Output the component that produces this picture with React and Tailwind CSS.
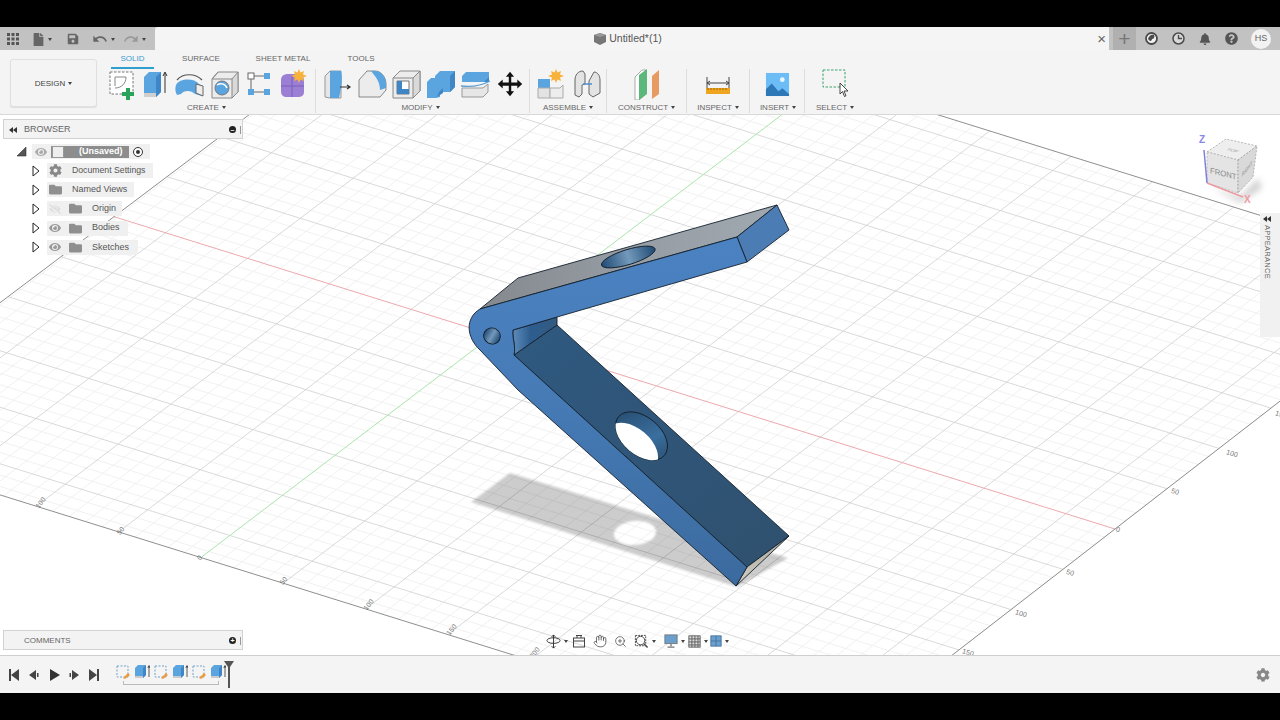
import React from 'react';
import { FaBell, FaQuestionCircle, FaCog, FaEye, FaEyeSlash, FaFolder, FaFile, FaSave } from 'react-icons/fa';
import { MdUndo, MdRedo } from 'react-icons/md';
import { Hand, ZoomIn } from 'lucide-react';

const Caret = () => <span className="ml-[3px] inline-block border-x-[2.5px] border-t-[3px] border-x-transparent border-t-[#444] align-middle" />;

const Ico = ({ children, size = 32, box = 32 }) => (
  <svg width={size} height={size} viewBox={`0 0 ${box} ${box}`}>{children}</svg>
);

const BLUE = '#5aa5e0';
const SIDE = '#d9d9d9';

const SketchIcon = () => (
  <Ico>
    <rect x="4" y="4" width="23" height="22" fill="#fff" stroke="#777" strokeWidth="1" strokeDasharray="2.5 1.5" />
    <path d="M9 9h11M9 9v9M20 9c0 6-4 11-11 11" fill="none" stroke="#888" strokeWidth="1" />
    <path d="M20 20h4v4h4v4h-4v4h-4v-4h-4v-4h4z" fill="#27a35a" />
  </Ico>
);
const ExtrudeIcon = () => (
  <Ico>
    <path d="M4 9l5-5h12v20l-5 5H4z" fill={BLUE} />
    <path d="M16 9l5-5v20l-5 5z" fill="#3e86c6" />
    <path d="M4 25h12v4H4z" fill="#cfcfcf" />
    <path d="M25 25V5M23 8l2-4 2 4" stroke="#333" strokeWidth="1" fill="none" />
  </Ico>
);
const RevolveIcon = () => (
  <Ico>
    <path d="M2 17c4-7 18-7 23-1l3 2v10l-7-2c-4-4-11-4-14 0l-4 1c-2-3-2-7-1-10z" fill={BLUE} />
    <path d="M22 16l7 2v10l-7-3z" fill="#eee" stroke="#666" strokeWidth="1" />
    <path d="M3 12c6-7 18-7 25 0" fill="none" stroke="#555" strokeWidth="1.2" />
  </Ico>
);
const HoleIcon = () => (
  <Ico>
    <path d="M3 11l6-7h20v20l-6 6H3z" fill="#ececec" stroke="#888" />
    <path d="M23 11l6-7v20l-6 6z" fill={SIDE} stroke="#888" />
    <path d="M3 11h20M9 4l-6 7" stroke="#888" fill="none" />
    <circle cx="13" cy="20" r="7" fill={BLUE} stroke="#777" />
    <path d="M8 17c3-2 8-2 10 3" stroke="#fff" strokeWidth="1.5" fill="none" />
  </Ico>
);
const PatternIcon = () => (
  <Ico>
    <rect x="5" y="5" width="6" height="6" fill="#fff" stroke="#666" />
    <rect x="21" y="5" width="6" height="6" fill={BLUE} />
    <rect x="5" y="21" width="6" height="6" fill={BLUE} />
    <rect x="21" y="21" width="6" height="6" fill={BLUE} />
    <path d="M11 8h10M8 11v10M11 24h10" stroke="#666" fill="none" />
  </Ico>
);
const FormIcon = () => (
  <Ico>
    <path d="M4 12c0-4 3-6 7-6h10c3 0 6 3 6 6v12c0 4-3 5-6 5H10c-4 0-6-2-6-6z" fill="#9b7fd4" />
    <path d="M4 18h23M15 8v21" stroke="#7a5fb8" strokeWidth="1" />
    <path d="M22 1l1.600 3.600L27 3l-1 3.600L30 8l-4 1.400 1 3.600-3.400-1.600L22 15l-1.600-3.600L17 13l1-3.600L14 8l4-1.400L17 3l3.400 1.600z" fill="#f7b23b" />
  </Ico>
);
const PressPullIcon = () => (
  <Ico>
    <path d="M4 8l5-5h11v27H9l-5-1z" fill="#e6e6e6" stroke="#999" />
    <path d="M9 3h11c2 8 0 19-2 27H9z" fill={BLUE} />
    <path d="M19 19h9M26 17l3 2-3 2" stroke="#333" strokeWidth="1.2" fill="none" />
  </Ico>
);
const FilletIcon = () => (
  <Ico>
    <path d="M3 12l8-9h8c6 0 11 6 11 13v6l-6 7H3z" fill="#ececec" stroke="#888" />
    <path d="M15 3h4c6 0 11 6 11 13v4l-6 2c0-8-4-13-9-19z" fill={BLUE} />
  </Ico>
);
const ShellIcon = () => (
  <Ico>
    <path d="M3 10l7-7h20v20l-7 7H3z" fill="#ececec" stroke="#888" />
    <path d="M23 10l7-7v20l-7 7z" fill={SIDE} stroke="#888" />
    <path d="M3 10h20" stroke="#888" />
    <path d="M7 13h12v13H7z" fill="#fff" stroke="#777" />
    <path d="M7 13h5v8h7v5H7z" fill="#3e86c6" />
  </Ico>
);
const CombineIcon = () => (
  <Ico>
    <path d="M10 8l5-5h15v16l-5 5H15v5l-4 1H2V14l4-4h4z" fill={BLUE} />
    <path d="M25 8l5-5v16l-5 5zM14 24l4-4v5l-6 4z" fill="#3e86c6" />
  </Ico>
);
const SplitIcon = () => (
  <Ico>
    <path d="M3 8l4-4h23v10H3z" fill={BLUE} />
    <path d="M25 14l5-5v5z" fill="#3e86c6" />
    <path d="M2 18c9 1 20 0 29-5" stroke="#5b9fd6" strokeWidth="1.400" fill="none" />
    <path d="M3 20h21l5-4v8l-5 5H3z" fill="#e6e6e6" stroke="#999" />
  </Ico>
);
const MoveIcon = () => (
  <Ico size={26}>
    <path d="M16 1l5 6h-3.500v7H25v-3.500l6 5.500-6 5.500V18h-7.500v7H21l-5 6-5-6h3.500v-7H7v3.500L1 16l6-5.500V14h7.500V7H11z" fill="#111" />
  </Ico>
);
const NewCompIcon = () => (
  <Ico>
    <path d="M2 11h12v12H2z" fill={BLUE} />
    <path d="M2 20h12v10H2z" fill="#e3e3e3" stroke="#aaa" />
    <path d="M14 20h10l3-3v13H14z" fill="#ededed" stroke="#aaa" />
    <path d="M20 1l1.600 3.600L25 3l-1 3.600L28 8l-4 1.400 1 3.600-3.400-1.600L20 15l-1.600-3.600L15 13l1-3.600L12 8l4-1.400L15 3l3.400 1.600z" fill="#f7b23b" />
  </Ico>
);
const JointIcon = () => (
  <Ico>
    <path d="M4 12c0-5 3-9 8-9l2 3v10l-3 1v9l-3 3-4-2z" fill="#e3e3e3" stroke="#666" />
    <path d="M29 12c0-5-3-8-6-8l-5 9v13l4 3 7-4z" fill="#e3e3e3" stroke="#666" />
    <path d="M12 16h9" stroke="#4a90d0" strokeWidth="1.500" />
  </Ico>
);
const PlaneIcon = () => (
  <Ico>
    <path d="M4 9l7-7h4v24l-7 6H4z" fill="#fff" stroke="#aaa" />
    <path d="M8 7l8-6v25l-8 6z" fill="#5cb87a" />
    <path d="M21 8l7-6v24l-7 5z" fill="#e79a62" />
  </Ico>
);
const RulerIcon = () => (
  <Ico>
    <path d="M5 9v14M27 9v14M5 15h22M8 13l-3 2 3 2M24 13l3 2-3 2" stroke="#444" strokeWidth="1" fill="none" />
    <rect x="4" y="20" width="24" height="6" fill="#efa51f" />
    <path d="M6 20v2M9 20v2M12 20v2M15 20v2M18 20v2M21 20v2M24 20v2" stroke="#8a5a00" strokeWidth="0.800" />
  </Ico>
);
const PictureIcon = () => (
  <Ico size={25} box={26}>
    <rect x="1" y="1" width="24" height="24" fill="#6cbcf5" />
    <circle cx="18" cy="8" r="2.500" fill="#e8f5ff" />
    <path d="M1 25v-7l6-6 7 8 4-3 7 6v2z" fill="#2f78b8" />
  </Ico>
);
const SelectIcon = () => (
  <Ico size={34} box={34}>
    <rect x="5" y="3" width="22" height="17" fill="none" stroke="#3aa36b" strokeWidth="1" strokeDasharray="2.500 1.500" />
    <path d="M22 16v11l2.500-2.500 2 5 1.500-.7-2-4.800H30z" fill="#fff" stroke="#333" strokeWidth="0.900" />
  </Ico>
);

const GROUPS = [
  { label: 'CREATE', w: 'w-[211px]', row: 'justify-start', cell: 'w-[34.2px]', text: 'pr-[7px]', icons: [SketchIcon, ExtrudeIcon, RevolveIcon, HoleIcon, PatternIcon, FormIcon] },
  { label: 'MODIFY', w: 'w-[214px]', row: 'justify-start pl-[3.7px]', cell: 'w-[34.6px]', text: 'pr-[4px]', icons: [PressPullIcon, FilletIcon, ShellIcon, CombineIcon, SplitIcon, MoveIcon] },
  { label: 'ASSEMBLE', w: 'w-[77px]', row: 'justify-start pl-[4.5px]', cell: 'w-[35px]', text: '', icons: [NewCompIcon, JointIcon] },
  { label: 'CONSTRUCT', w: 'w-[80px]', row: 'justify-center', cell: 'w-[34px]', text: '', icons: [PlaneIcon] },
  { label: 'INSPECT', w: 'w-[63px]', row: 'justify-center', cell: 'w-[34px]', text: '', icons: [RulerIcon] },
  { label: 'INSERT', w: 'w-[55px]', row: 'justify-center', cell: 'w-[34px]', text: 'pl-[2px]', icons: [PictureIcon] },
  { label: 'SELECT', w: 'w-[60px]', row: 'justify-center', cell: 'w-[34px]', text: '', icons: [SelectIcon], last: true },
];

const TitleBar = () => (
  <div className="flex h-[23px] shrink-0 bg-[#c2c2c2] text-[#555]">
    <div className="flex w-[155px] items-center pl-[7px] pt-[1px]">
      <svg width="12" height="12" viewBox="0 0 12 12" fill="#555">
        {[0, 4.500, 9].map((x) => [0, 4.500, 9].map((y) => <rect key={`${x}-${y}`} x={x} y={y} width="3" height="3" />))}
      </svg>
      <FaFile className="ml-[13px] text-[13px] text-[#666]" />
      <Caret />
      <FaSave className="ml-[15px] text-[12px] text-[#666]" />
      <MdUndo className="ml-[13px] text-[16px] text-[#666]" />
      <Caret />
      <MdRedo className="ml-[8px] text-[16px] text-[#999]" />
      <Caret />
    </div>
    <div className="relative flex flex-1 items-center justify-center rounded-tl-[3px] bg-[#f5f5f5] pr-[9px] pt-[1px]">
      <svg width="14" height="14" viewBox="0 0 14 14" className="mr-[2px]">
        <path d="M1 3l6-2 6 2v7l-6 3-6-3z" fill="#777" />
        <path d="M1 3l6 2 6-2-6-2z" fill="#999" />
      </svg>
      <span className="text-[10.5px]">Untitled*(1)</span>
      <span className="absolute right-[3px] top-[2px] text-[15px] leading-[20px] text-[#666]">×</span>
    </div>
    <div className="flex w-[171px] items-center pl-[4px]">
      <div className="flex h-[23px] w-[23px] items-center justify-center bg-[#b0b0b0] text-[21px] leading-none text-[#777]">+</div>
      <svg width="13" height="13" viewBox="0 0 13 13" className="ml-[9px]">
        <circle cx="6.500" cy="6.500" r="5.500" fill="#f2f2f2" stroke="#4a4a4a" strokeWidth="1.800" />
        <path d="M3 7c1-3 3-5 6-4 1 2 0 4-2 4 0 2-2 3-4 0z" fill="#4a4a4a" />
      </svg>
      <svg width="13" height="13" viewBox="0 0 13 13" className="ml-[14px]">
        <circle cx="6.500" cy="6.500" r="5.500" fill="#d8d8d8" stroke="#4a4a4a" strokeWidth="1.500" />
        <path d="M6.500 3v3.500H10" fill="none" stroke="#4a4a4a" strokeWidth="1.400" />
      </svg>
      <FaBell className="ml-[14px] text-[12px] text-[#555]" />
      <FaQuestionCircle className="ml-[14px] text-[13px] text-[#555]" />
      <div className="ml-[13px] flex h-[20px] w-[20px] items-center justify-center rounded-full bg-[#f2f2f2] text-[9px] text-[#666]">HS</div>
    </div>
  </div>
);

const Toolbar = () => (
  <div className="flex h-[65px] shrink-0 border-b border-[#d8d8d8] bg-[#f4f4f4] pl-[10px] pt-[1px]">
    <div className="mt-[8px] flex h-[48px] w-[87px] items-center justify-center rounded-[3px] border border-[#e0e0e0] bg-[#f4f4f4] pt-[1px] text-[8px] text-[#444] shadow-[0_1px_1px_#ddd]">
      DESIGN <Caret />
    </div>
    <div className="ml-[8px] flex flex-col">
      <div className="flex h-[18px] text-[8px] leading-[12px] text-[#666]">
        <div className="ml-[6px] h-[18px] w-[43px] border-b-2 border-[#2f9fd0] pt-[2px] text-center text-[#3b9ad0]">SOLID</div>
        <div className="w-[94px] pt-[2px] text-center">SURFACE</div>
        <div className="w-[70px] pt-[2px] text-center">SHEET METAL</div>
        <div className="w-[86px] pt-[2px] text-center">TOOLS</div>
      </div>
      <div className="flex">
        {GROUPS.map((g) => (
          <div key={g.label} className={`${g.w} flex h-[44px] flex-col ${g.last ? '' : 'border-r border-[#dcdcdc]'}`}>
            <div className={`flex h-[30px] shrink-0 items-center ${g.row}`}>
              {g.icons.map((Icon, i) => (
                <div key={i} className={`flex shrink-0 justify-center ${g.cell}`}><Icon /></div>
              ))}
            </div>
            <div className={`mt-[3px] whitespace-nowrap text-center text-[8px] leading-[11px] text-[#666] ${g.text}`}>{g.label}<Caret /></div>
          </div>
        ))}
      </div>
    </div>
  </div>
);

const O = { lx: 114, ly: 216.7, rx: 1115, ry: 529 };
const VMIN = -5.55;
const VMAX = 6.35;
const UMIN = -4.63;
const UMAX = 7.6;

const leftPt = (v) => [O.lx + 53 * v, O.ly - 40 * v];
const rightPt = (v) => [O.rx + 52 * v, O.ry - 40.3 * v];
const gridPt = (u, v) => {
  const k = (u - UMIN) / (UMAX - UMIN);
  const l = leftPt(v);
  const r = rightPt(v);
  return [l[0] + (r[0] - l[0]) * k, l[1] + (r[1] - l[1]) * k];
};
const seg = (a, b, stroke, w, key) => (
  <line key={key} x1={a[0]} y1={a[1]} x2={b[0]} y2={b[1]} stroke={stroke} strokeWidth={w} />
);

const gridLines = () => {
  const out = [];
  for (let i = -25; i <= 40; i++) {
    const u = i / 5;
    if (u < UMIN || u > UMAX || i % 5 === 0) continue;
    out.push(seg(gridPt(u, VMIN), gridPt(u, VMAX), '#eeeeee', 0.8, `mu${i}`));
  }
  for (let i = -30; i <= 35; i++) {
    const v = i / 5;
    if (v < VMIN || v > VMAX || i % 5 === 0) continue;
    out.push(seg(gridPt(UMIN, v), gridPt(UMAX, v), '#eeeeee', 0.8, `mv${i}`));
  }
  for (let u = -4; u <= 7; u++) {
    if (u !== 0) out.push(seg(gridPt(u, VMIN), gridPt(u, VMAX), '#cfcfcf', 0.8, `u${u}`));
  }
  for (let v = -5; v <= 6; v++) {
    if (v !== 0) out.push(seg(gridPt(UMIN, v), gridPt(UMAX, v), '#cfcfcf', 0.8, `v${v}`));
  }
  out.push(seg(gridPt(UMIN, 0), gridPt(UMAX, 0), '#eda9ad', 1, 'red'));
  out.push(seg(gridPt(0, VMIN), gridPt(0, VMAX), '#a9e5ab', 1, 'green'));
  out.push(seg(gridPt(UMIN, VMIN), gridPt(UMAX, VMIN), '#8f8f8f', 1, 'e1'));
  out.push(seg(gridPt(UMAX, VMIN), gridPt(UMAX, VMAX), '#8f8f8f', 1, 'e2'));
  out.push(seg(gridPt(UMIN, VMAX), gridPt(UMAX, VMAX), '#8f8f8f', 1, 'e3'));
  out.push(seg(gridPt(UMIN, VMIN), gridPt(UMIN, VMAX), '#8f8f8f', 1, 'e4'));
  return out;
};

const BOTTOM_LABELS = [['100', 41, 503], ['50', 121, 531], ['0', 200, 558], ['50', 284, 581], ['100', 369, 605], ['150', 452, 630], ['200', 535, 653]];
const RIGHT_LABELS = [['150', 1281, 415], ['100', 1232, 454], ['50', 1175, 492], ['0', 1118, 530], ['50', 1070, 573], ['100', 1021, 614], ['150', 968, 653]];

const Scene = () => (
  <svg className="absolute inset-0" width="1280" height="540" viewBox="0 115 1280 540">
    <defs>
      <linearGradient id="front" x1="0" y1="0" x2="0" y2="1">
        <stop offset="0" stopColor="#4b82c2" />
        <stop offset="0.45" stopColor="#467bb6" />
        <stop offset="1" stopColor="#3b6a9e" />
      </linearGradient>
      <linearGradient id="dark" x1="0" y1="0" x2="1" y2="1">
        <stop offset="0" stopColor="#2f5980" />
        <stop offset="1" stopColor="#30516f" />
      </linearGradient>
      <linearGradient id="top" x1="0" y1="0" x2="1" y2="0">
        <stop offset="0" stopColor="#85898e" />
        <stop offset="0.5" stopColor="#959ca3" />
        <stop offset="1" stopColor="#a1a9b0" />
      </linearGradient>
      <linearGradient id="bore" x1="0" y1="0" x2="1" y2="0">
        <stop offset="0" stopColor="#1f4a74" />
        <stop offset="0.5" stopColor="#7399bb" />
        <stop offset="1" stopColor="#1f4a74" />
      </linearGradient>
      <linearGradient id="bigbore" x1="0" y1="0" x2="1" y2="0.3">
        <stop offset="0" stopColor="#264b6e" />
        <stop offset="0.7" stopColor="#3a6f9f" />
        <stop offset="1" stopColor="#305a80" />
      </linearGradient>
      <linearGradient id="notch" x1="0" y1="0" x2="1" y2="0">
        <stop offset="0" stopColor="#5d8cbb" />
        <stop offset="0.4" stopColor="#2d5d8f" />
        <stop offset="1" stopColor="#335a7f" />
      </linearGradient>
      <linearGradient id="endcap" x1="0" y1="1" x2="1" y2="0">
        <stop offset="0" stopColor="#d2cec3" />
        <stop offset="1" stopColor="#a9a69b" />
      </linearGradient>
      <clipPath id="bigHole">
        <ellipse cx="641.500" cy="436" rx="30" ry="19" transform="rotate(40 641.500 436)" />
      </clipPath>
      <filter id="soft"><feGaussianBlur stdDeviation="1" /></filter>
      <filter id="cubeShadow"><feGaussianBlur stdDeviation="3" /></filter>
    </defs>

    {gridLines()}

    {BOTTOM_LABELS.map(([t, x, y], i) => (
      <text key={i} transform={`translate(${x} ${y}) rotate(-52)`} textAnchor="middle" dominantBaseline="middle" fontSize="7" fill="#777" fontFamily="Liberation Sans">{t}</text>
    ))}
    {RIGHT_LABELS.map(([t, x, y], i) => (
      <text key={i} transform={`translate(${x} ${y}) rotate(17)`} textAnchor="middle" dominantBaseline="middle" fontSize="7" fill="#777" fontFamily="Liberation Sans">{t}</text>
    ))}

    <path
      d="M510 473L471 502L737 587L788 558ZM614 533a21 12 -5 1 0 42 0a21 12 -5 1 0 -42 0Z"
      fill="#000"
      fillOpacity="0.2"
      fillRule="evenodd"
      filter="url(#soft)"
    />

    <g stroke="#14202c" strokeWidth="0.900" strokeLinejoin="round">
      <path d="M480 309L518 278L777 205L737 237Z" fill="url(#top)" />
      <path d="M777 205L789 230L747 262L737 237Z" fill="#4b7cb3" />
      <path d="M514 355L557 325L789 536L747 567Z" fill="url(#dark)" />
      <path d="M513 330L557 317L557 325L514 355C516 346 512 338 513 330Z" fill="url(#notch)" />
      <path d="M747 567L789 536L736 586Z" fill="url(#endcap)" />
      <path d="M480 309L737 237L747 262L557 317L513 330C512 338 516 346 514 355L747 567L736 586L518 390L480 350C466 337 465 318 480 309Z" fill="url(#front)" />
      <ellipse cx="628.300" cy="257" rx="28" ry="7.500" transform="rotate(-17 628.300 257)" fill="url(#bore)" />
      <ellipse cx="492" cy="336" rx="8.500" ry="8" transform="rotate(30 492 336)" fill="url(#bore)" />
      <ellipse cx="641.500" cy="436" rx="30" ry="19" transform="rotate(40 641.500 436)" fill="url(#bigbore)" />
    </g>
    <g clipPath="url(#bigHole)">
      <ellipse cx="632" cy="447" rx="30" ry="19" transform="rotate(40 632 447)" fill="#fff" />
    </g>

    <g>
      <path d="M1210 186L1240 197L1258 178L1262 188L1240 203Z" fill="#000" fillOpacity="0.18" filter="url(#cubeShadow)" />
      <path d="M1207 152L1226 139L1257 146L1238 160Z" fill="#eeeeee" stroke="#999" strokeWidth="0.700" strokeDasharray="2 1.500" />
      <path d="M1207 152L1238 160L1238 193L1207 183Z" fill="#e4e4e4" stroke="#aaa" strokeWidth="0.700" strokeDasharray="2 1.500" />
      <path d="M1238 160L1257 146L1253 177L1238 193Z" fill="#d9d9d9" stroke="#999" strokeWidth="0.700" strokeDasharray="2 1.500" />
      <text transform="matrix(0.96 0.24 0 1 1210 173)" fontSize="8" fill="#888" fontFamily="Liberation Sans">FRONT</text>
      <text transform="matrix(0.55 -0.65 0 1 1242 177)" fontSize="6" fill="#888" fontFamily="Liberation Sans">RIGHT</text>
      <text transform="matrix(0.9 0.2 -0.6 0.5 1226 150)" fontSize="6" fill="#999" fontFamily="Liberation Sans">TOP</text>
      <path d="M1204 150L1207 183" stroke="#7f7fe0" strokeWidth="1.500" />
      <path d="M1207 183L1243 197" stroke="#ec9aa2" strokeWidth="1.500" />
      <text x="1199" y="143" fontSize="10" fontWeight="bold" fill="#8888e8" fontFamily="Liberation Sans">Z</text>
      <text x="1244" y="203" fontSize="10" fontWeight="bold" fill="#f09aa0" fontFamily="Liberation Sans">X</text>
    </g>
  </svg>
);

const DoubleLeft = () => (
  <svg width="8" height="6" viewBox="0 0 8 6" fill="#333"><path d="M4 0v6L0 3zM8 0v6L4 3z" /></svg>
);

const PanelHeader = ({ title, top, sign, size }) => (
  <div className={`absolute left-[3px] ${top} flex h-[20px] w-[240px] items-center border border-[#d2d2d2] bg-[#f3f3f3] pt-[1px] ${size} text-[#666]`}>
    <span className="ml-[5px] w-[15px]">{sign === '-' ? <DoubleLeft /> : null}</span>
    <span>{title}</span>
    <span className="ml-auto flex h-[7px] w-[7px] items-center justify-center rounded-full bg-[#222]">
      <span className="text-[7px] font-bold leading-none text-white">{sign === '-' ? '–' : '+'}</span>
    </span>
    <span className="ml-[4px] mr-[1px] h-[8px] border-l border-[#999]" />
  </div>
);

const Arrow = () => (
  <svg width="8" height="12" viewBox="0 0 8 12" className="shrink-0"><path d="M1 1l6 5-6 5z" fill="#fff" stroke="#222" strokeWidth="1" /></svg>
);

const TREE = [
  { label: 'Document Settings', pill: 'w-[106px]', gear: true, text: 'text-[8.7px]' },
  { label: 'Named Views', pill: 'w-[87px]' },
  { label: 'Origin', pill: 'w-[75px]', eye: 'off' },
  { label: 'Bodies', pill: 'w-[81px]', eye: 'on' },
  { label: 'Sketches', pill: 'w-[91px]', eye: 'on' },
];

const Browser = () => (
  <div className="absolute left-[16px] top-[27px] flex flex-col text-[9px] text-[#555]">
    <div className="flex h-[19px] items-center">
      <svg width="11" height="11" viewBox="0 0 11 11" className="shrink-0"><path d="M10 1v9H1z" fill="#555" stroke="#333" strokeWidth="0.600" /></svg>
      <div className="ml-[5px] flex h-[15px] w-[118px] items-center bg-[#f0f0f0]">
        <FaEye className="ml-[3px] text-[12px] text-[#aaa]" />
        <div className="ml-[4px] flex h-[12px] w-[78px] items-center bg-[#8d8d8d]">
          <span className="ml-[1px] h-[12px] w-[12px] border border-[#999] bg-[#eee]" />
          <span className="ml-[15px] text-[9px] font-bold text-white">(Unsaved)</span>
        </div>
        <span className="ml-[4px] flex h-[10px] w-[10px] items-center justify-center rounded-full border border-[#333] bg-white">
          <span className="h-[4px] w-[4px] rounded-full bg-[#333]" />
        </span>
      </div>
    </div>
    {TREE.map((r) => (
      <div key={r.label} className="flex h-[19.2px] items-center pl-[16px]">
        <Arrow />
        <div className={`ml-[7px] flex h-[15px] items-center bg-[#f0f0f0] ${r.pill}`}>
          {r.eye === 'on' && <FaEye className="ml-[2px] w-[12px] text-[12px] text-[#999]" />}
          {r.eye === 'off' && <FaEyeSlash className="ml-[2px] w-[12px] text-[12px] text-[#ddd]" />}
          {r.gear ? <FaCog className="ml-[2px] text-[13px] text-[#888]" /> : <FaFolder className={`${r.eye ? 'ml-[8px]' : 'ml-[2px]'} text-[13px] text-[#8f8f8f]`} />}
          <span className={`${r.eye ? 'ml-[10px]' : 'ml-[10px]'} whitespace-nowrap ${r.text || ''}`}>{r.label}</span>
        </div>
      </div>
    ))}
  </div>
);

const Appearance = () => (
  <div className="absolute right-0 top-[98px] flex h-[124px] w-[20px] flex-col items-center bg-[#f1f1f1] pr-[6px] pt-[3px]">
    <DoubleLeft />
    <span className="mt-[3px] text-[7.6px] leading-[14px] tracking-[0.2px] text-[#666] [writing-mode:vertical-rl]">APPEARANCE</span>
  </div>
);

const NavBar = () => (
  <div className="absolute bottom-[4px] left-[546px] flex h-[20px] items-center text-[#555]">
    <span className="flex w-[26px] items-center">
      <svg width="15" height="15" viewBox="0 0 16 16" fill="none" stroke="#333"><ellipse cx="8" cy="7" rx="7" ry="3" /><path d="M8 1v14M6 3l2-2 2 2M6 13l2 2 2-2" /></svg>
      <Caret />
    </span>
    <span className="flex w-[21px]"><svg width="14" height="14" viewBox="0 0 14 14" fill="none" stroke="#444"><rect x="1.500" y="4" width="11" height="9" /><path d="M1.500 7h11M4 1.500h6M5 4V2M9 4V2" /></svg></span>
    <span className="flex w-[21px]"><Hand size={14} strokeWidth={1.300} color="#444" /></span>
    <span className="flex w-[20px]"><ZoomIn size={13} strokeWidth={1.300} color="#444" /></span>
    <span className="flex w-[30px] items-center">
      <svg width="15" height="15" viewBox="0 0 16 16" fill="none" stroke="#444"><rect x="1.500" y="1.500" width="11" height="11" strokeDasharray="2 1" /><circle cx="7" cy="7" r="4.500" /><path d="M10.500 10.500l4 4" strokeWidth="1.500" /></svg>
      <Caret />
    </span>
    <span className="flex w-[24px] items-center">
      <svg width="14" height="14" viewBox="0 0 16 16"><rect x="1" y="1" width="14" height="10" fill="#6a9fce" stroke="#777" /><path d="M8 11v3M4 15h8" stroke="#777" strokeWidth="1.500" /></svg>
      <Caret />
    </span>
    <span className="flex w-[22px] items-center">
      <svg width="13" height="13" viewBox="0 0 15 15" fill="#ddd" stroke="#555"><rect x="1" y="1" width="13" height="13" /><path d="M1 4.500h13M1 8h13M1 11.500h13M4.500 1v13M8 1v13M11.500 1v13" /></svg>
      <Caret />
    </span>
    <span className="flex items-center">
      <svg width="12" height="12" viewBox="0 0 14 14" fill="#6a9fce" stroke="#45719b"><rect x="1" y="1" width="12" height="12" /><path d="M1 7h12M7 1v12" /></svg>
      <Caret />
    </span>
  </div>
);

const MiniSketch = () => (
  <svg width="16" height="16" viewBox="0 0 16 16">
    <rect x="2" y="2" width="11" height="11" fill="none" stroke="#6fa3c9" strokeDasharray="2 1.500" />
    <path d="M8 14l5-5 2 2-5 4z" fill="#ef9a3c" />
  </svg>
);
const MiniExtrude = () => (
  <svg width="16" height="16" viewBox="0 0 16 16">
    <path d="M1 4l3-3h8v10l-3 3H1z" fill={BLUE} />
    <path d="M9 4l3-3v10l-3 3z" fill="#3e86c6" />
    <path d="M1 12h8v2H1z" fill="#ccc" />
    <path d="M15 13V2M13.800 4L15 1.500 16 4" stroke="#333" strokeWidth="0.800" fill="none" />
  </svg>
);

const Timeline = () => (
  <div className="flex h-[38px] shrink-0 items-center border-t border-[#cfcfcf] bg-[#f4f4f4] pl-[8px] pr-[10px]">
    <div className="flex w-[92px] items-center justify-between">
      <svg width="11" height="12" viewBox="0 0 11 12" fill="#444"><path d="M1 0h2v12H1zM11 0v12L3 6z" /></svg>
      <svg width="11" height="10" viewBox="0 0 11 10" fill="#444"><path d="M8 0v10L1 5zM9 3h1.500v4H9z" /></svg>
      <svg width="11" height="12" viewBox="0 0 11 12" fill="#333"><path d="M1 0l10 6-10 6z" /></svg>
      <svg width="11" height="10" viewBox="0 0 11 10" fill="#444"><path d="M3 0v10l7-5zM.500 3H2v4H.500z" /></svg>
      <svg width="11" height="12" viewBox="0 0 11 12" fill="#444"><path d="M0 0l8 6-8 6zM8 0h2v12H8z" /></svg>
    </div>
    <div className="relative ml-[15px] flex h-[30px] w-[120px] pt-[4px]">
      <div className="flex h-[16px] w-[111px] justify-between">
        <MiniSketch /><MiniExtrude /><MiniSketch /><MiniExtrude /><MiniSketch /><MiniExtrude />
      </div>
      <div className="absolute left-[8px] top-[21px] h-[4px] w-[96px] border-x border-b border-[#bbb]" />
      <svg className="absolute left-[108px] top-[1px]" width="12" height="27" viewBox="0 0 12 27"><path d="M1 0h10L7 6v21H5V6z" fill="#555" /></svg>
    </div>
    <FaCog className="ml-auto text-[14px] text-[#888]" />
  </div>
);

export default function App() {
  return (
    <div className="flex h-[720px] w-[1280px] flex-col overflow-hidden bg-black font-['Liberation_Sans',Arial,sans-serif]">
      <div className="h-[27px] shrink-0" />
      <TitleBar />
      <Toolbar />
      <div className="relative flex-1 overflow-hidden bg-white">
        <Scene />
        <PanelHeader title="BROWSER" top="top-[4px]" sign="-" size="text-[9px]" />
        <Browser />
        <Appearance />
        <PanelHeader title="COMMENTS" top="top-[515px]" sign="+" size="text-[8px]" />
        <NavBar />
      </div>
      <Timeline />
      <div className="h-[27px] shrink-0" />
    </div>
  );
}
